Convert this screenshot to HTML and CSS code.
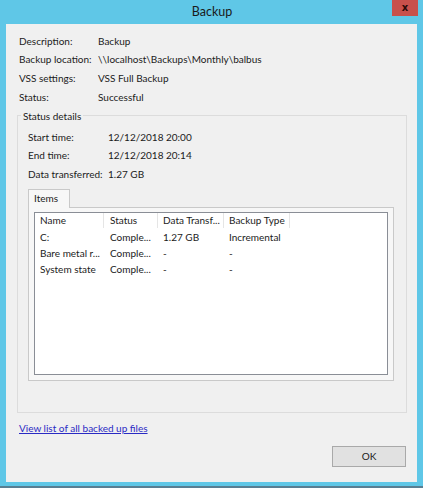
FILE: index.html
```html
<!DOCTYPE html>
<html>
<head>
  <meta charset="UTF-8">
  <title>Backup</title>
  <link rel="stylesheet" href="styles.css">
</head>
<body>

<div class="window">
  <div class="titlebar">
    <span class="titlebar__spacer"></span>
    <span class="titlebar__text">Backup</span>
    <button class="titlebar__close">x</button>
  </div>

  <div class="client">
    <div class="props">
      <div class="prop"><span class="prop__key">Description:</span><span>Backup</span></div>
      <div class="prop"><span class="prop__key">Backup location:</span><span>\\localhost\Backups\Monthly\balbus</span></div>
      <div class="prop"><span class="prop__key">VSS settings:</span><span>VSS Full Backup</span></div>
      <div class="prop"><span class="prop__key">Status:</span><span>Successful</span></div>
    </div>

    <fieldset class="group">
      <legend class="group__label">Status details</legend>
      <div class="props props--inner">
        <div class="prop"><span class="prop__key">Start time:</span><span>12/12/2018 20:00</span></div>
        <div class="prop"><span class="prop__key">End time:</span><span>12/12/2018 20:14</span></div>
        <div class="prop"><span class="prop__key">Data transferred:</span><span>1.27 GB</span></div>
      </div>

      <div class="tabs">
        <div class="tabs__strip">
          <span class="tabs__tab">Items</span>
        </div>
        <div class="tabs__panel">
          <div class="listview">
            <div class="listview__row listview__row--head">
              <span class="col col--name">Name</span>
              <span class="col col--status">Status</span>
              <span class="col col--data">Data Transf...</span>
              <span class="col col--type">Backup Type</span>
            </div>
            <div class="listview__row">
              <span class="col col--name">C:</span>
              <span class="col col--status">Comple...</span>
              <span class="col col--data">1.27 GB</span>
              <span class="col col--type">Incremental</span>
            </div>
            <div class="listview__row">
              <span class="col col--name">Bare metal r...</span>
              <span class="col col--status">Comple...</span>
              <span class="col col--data">-</span>
              <span class="col col--type">-</span>
            </div>
            <div class="listview__row">
              <span class="col col--name">System state</span>
              <span class="col col--status">Comple...</span>
              <span class="col col--data">-</span>
              <span class="col col--type">-</span>
            </div>
          </div>
        </div>
      </div>
    </fieldset>

    <a class="link" href="#">View list of all backed up files</a>

    <div class="footer">
      <button class="button">OK</button>
    </div>
  </div>
</div>

</body>
</html>
```

FILE: styles.css
```css
html, body {
  margin: 0;
  padding: 0;
}
*, *:before, *:after {
  box-sizing: border-box;
}
body {
  background-color: #5fc7e7;
  font-family: "Segoe UI", Lato, "Liberation Sans", sans-serif;
  font-size: 10px;
  color: #1b1b1b;
}
.window {
  display: flex;
  flex-direction: column;
  height: 488px;
  padding: 0 6px 4px;
  border-bottom: 2px solid #587f93;
}

/* title bar */
.titlebar {
  display: grid;
  grid-template-columns: 1fr auto 1fr;
  align-items: center;
  height: 24px;
  margin-right: -1px;
}
.titlebar__text {
  font-size: 12.5px;
  color: #1a1a1a;
  padding-bottom: 1px;
}
.titlebar__close {
  justify-self: end;
  align-self: start;
  width: 26px;
  height: 16px;
  padding: 0;
  border: none;
  background-color: #c8504b;
  color: #2a0a08;
  font-family: "DejaVu Sans", sans-serif;
  font-weight: bold;
  font-size: 10px;
  line-height: 14px;
}

/* dialog body */
.client {
  flex: 1;
  display: flex;
  flex-direction: column;
  background-color: #f0f0f0;
  padding: 7.6px 10px 14px 13px;
}
.prop {
  display: flex;
  height: 18.67px;
  line-height: 18.67px;
  white-space: nowrap;
}
.prop__key {
  width: 79px;
  flex: none;
}
.props--inner .prop {
  height: 18.5px;
  line-height: 18.5px;
}
.props--inner .prop__key {
  width: 80px;
}

/* Status details group */
.group {
  margin: 1.7px 0 0 -2px;
  padding: 3.7px 12px 31px 10px;
  border: 1px solid #dcdcdc;
  min-width: 0;
}
.group__label {
  margin-left: -7px;
  padding: 0 2px;
  line-height: 16px;
}

/* tab control */
.tabs {
  margin-top: 5.8px;
}
.tabs__strip {
  display: flex;
  height: 18px;
}
.tabs__tab {
  width: 42px;
  height: 19px;
  padding-left: 5px;
  line-height: 17px;
  border: 1px solid #c9c9c9;
  border-bottom: none;
  background-color: #f7f7f7;
  position: relative;
  z-index: 1;
}
.tabs__panel {
  height: 174px;
  padding: 4px 5px 5px;
  border: 1px solid #c9c9c9;
  background-color: #f7f7f7;
}

/* list view */
.listview {
  height: 100%;
  border: 1px solid #8a8e96;
  background-color: #ffffff;
}
.listview__row {
  display: flex;
  height: 16px;
  line-height: 16px;
  white-space: nowrap;
}
.listview__row--head {
  height: 15px;
  line-height: 15px;
  margin-bottom: 1px;
}
.col {
  flex: none;
  padding-left: 5px;
}
.col--name { width: 69px; }
.col--status { width: 54px; padding-left: 6px; }
.col--data { width: 66px; }
.col--type { width: 66px; }
.listview__row--head .col {
  border-right: 1px solid #e5e5e5;
}

.link {
  align-self: flex-start;
  margin-top: 7px;
  line-height: 16px;
  color: #2a2ac4;
}

.footer {
  display: flex;
  justify-content: flex-end;
  margin-top: 10px;
}
.button {
  width: 74px;
  height: 21px;
  margin-right: 1px;
  padding: 0;
  border: 1px solid #a9a9a9;
  background-color: #e1e1e1;
  font-family: inherit;
  font-size: 10px;
  color: #1b1b1b;
}
```
